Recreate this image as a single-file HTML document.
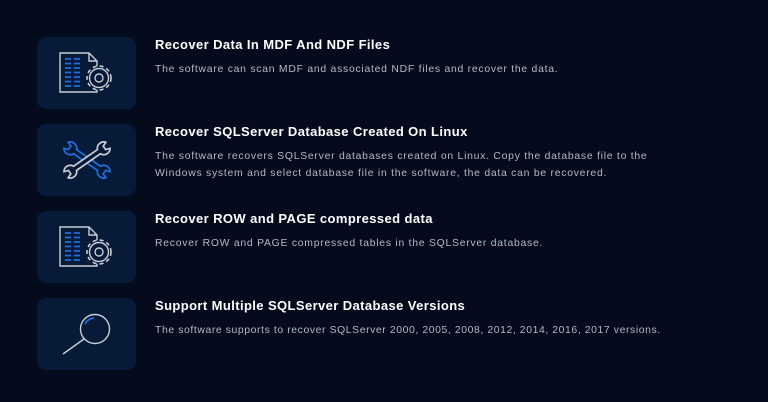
<!DOCTYPE html>
<html><head><style>
body{margin:0;width:768px;height:402px;background:#030b1c;font-family:"Liberation Sans",sans-serif;overflow:hidden;position:relative}
.box{position:absolute;left:37px;width:99px;height:72px;background:#071a38;border-radius:9px}
.box svg{position:absolute;left:0;top:0}
.t{position:absolute;left:155px;color:#fff;font-weight:bold;font-size:13px;letter-spacing:0.4px}
.d{position:absolute;left:155px;color:#b4b9c2;font-size:10.4px;letter-spacing:0.75px;line-height:17px;width:520px}
</style></head><body>
<div class="box" style="top:37px"><svg width="99" height="72">
<path d="M23 16H52L60 24V55H23Z M52 16V24H60" fill="none" stroke="#c8cdd6" stroke-width="1.4"/>
<g stroke="#1f6fe0" stroke-width="1.8"><path d="M28 22h6M37 22h6M28 26.5h6M37 26.5h6M28 31h6M37 31h6M28 35.5h6M37 35.5h6M28 40h6M37 40h6M28 44.5h6M37 44.5h6M28 49h6M37 49h6"/></g>
<circle cx="62" cy="41" r="12" fill="#071a38" stroke="#c8cdd6" stroke-width="1.6" stroke-dasharray="4 3.1"/>
<circle cx="62" cy="41" r="9.5" fill="#071a38" stroke="#c8cdd6" stroke-width="1.4"/>
<circle cx="62" cy="41" r="4" fill="none" stroke="#c8cdd6" stroke-width="1.4"/>
</svg></div>
<div class="box" style="top:124px"><svg width="99" height="72">
<g transform="translate(50,36) scale(0.85)">
<path transform="rotate(35)" d="M17.1 -3L-17.1 -3A7.5 7.5 0 0 0 -30.1 -4.3L-25 -2.5L-25 2.5L-30.1 4.3A7.5 7.5 0 0 0 -17.1 3L17.1 3A7.5 7.5 0 0 0 30.1 4.3L25 2.5L25 -2.5L30.1 -4.3A7.5 7.5 0 0 0 17.1 -3Z" fill="#071a38" stroke="#1f6fe0" stroke-width="2"/>
<path transform="rotate(-35)" d="M17.1 -3L-17.1 -3A7.5 7.5 0 0 0 -30.1 -4.3L-25 -2.5L-25 2.5L-30.1 4.3A7.5 7.5 0 0 0 -17.1 3L17.1 3A7.5 7.5 0 0 0 30.1 4.3L25 2.5L25 -2.5L30.1 -4.3A7.5 7.5 0 0 0 17.1 -3Z" fill="#071a38" stroke="#c8cdd6" stroke-width="2"/>
</g>
</svg></div>
<div class="box" style="top:211px"><svg width="99" height="72">
<path d="M23 16H52L60 24V55H23Z M52 16V24H60" fill="none" stroke="#c8cdd6" stroke-width="1.4"/>
<g stroke="#1f6fe0" stroke-width="1.8"><path d="M28 22h6M37 22h6M28 26.5h6M37 26.5h6M28 31h6M37 31h6M28 35.5h6M37 35.5h6M28 40h6M37 40h6M28 44.5h6M37 44.5h6M28 49h6M37 49h6"/></g>
<circle cx="62" cy="41" r="12" fill="#071a38" stroke="#c8cdd6" stroke-width="1.6" stroke-dasharray="4 3.1"/>
<circle cx="62" cy="41" r="9.5" fill="#071a38" stroke="#c8cdd6" stroke-width="1.4"/>
<circle cx="62" cy="41" r="4" fill="none" stroke="#c8cdd6" stroke-width="1.4"/>
</svg></div>
<div class="box" style="top:298px"><svg width="99" height="72">
<circle cx="58" cy="31" r="14.5" fill="none" stroke="#c8cdd6" stroke-width="1.4"/>
<path d="M48 26a11 11 0 0 1 9-6" fill="none" stroke="#1f6fe0" stroke-width="1.8"/>
<path d="M47 41L26 56" stroke="#c8cdd6" stroke-width="1.4"/>
</svg></div>

<div class="t" style="top:37px">Recover Data In MDF And NDF Files</div>
<div class="d" style="top:61px">The software can scan MDF and associated NDF files and recover the data.</div>
<div class="t" style="top:124px">Recover SQLServer Database Created On Linux</div>
<div class="d" style="top:148px">The software recovers SQLServer databases created on Linux. Copy the database file to the Windows system and select database file in the software, the data can be recovered.</div>
<div class="t" style="top:211px">Recover ROW and PAGE compressed data</div>
<div class="d" style="top:235px">Recover ROW and PAGE compressed tables in the SQLServer database.</div>
<div class="t" style="top:298px">Support Multiple SQLServer Database Versions</div>
<div class="d" style="top:322px;white-space:nowrap;letter-spacing:0.6px">The software supports to recover SQLServer 2000, 2005, 2008, 2012, 2014, 2016, 2017 versions.</div>
</body></html>
